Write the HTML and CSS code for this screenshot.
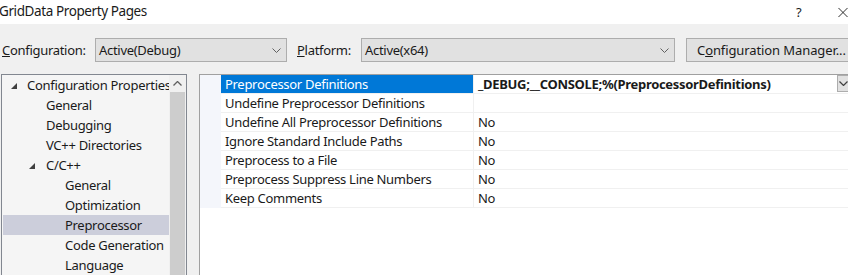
FILE: index.html
```html
<!DOCTYPE html>
<html>
<head>
<meta charset="utf-8">
<link rel="stylesheet" href="styles.css">
</head>
<body>
<div class="window">
  <div class="titlebar">
    <span class="title">GridData Property Pages</span>
    <span class="help">?</span>
    <span class="close"><svg width="11" height="11" viewBox="0 0 11 11"><path d="M0.5 0.5 L10.5 10.5 M10.5 0.5 L0.5 10.5" stroke="#1a1a1a" stroke-width="1" fill="none"/></svg></span>
  </div>
  <div class="toolbar">
    <span class="label label-config"><u>C</u>onfiguration:</span>
    <div class="combo combo-config">
      <span class="combo-text">Active(Debug)</span>
      <svg class="chev" width="9" height="5" viewBox="0 0 9 5"><path d="M0.5 0.5 L4.5 4.5 L8.5 0.5" stroke="#606060" fill="none"/></svg>
    </div>
    <span class="label label-platform"><u>P</u>latform:</span>
    <div class="combo combo-platform">
      <span class="combo-text">Active(x64)</span>
      <svg class="chev" width="9" height="5" viewBox="0 0 9 5"><path d="M0.5 0.5 L4.5 4.5 L8.5 0.5" stroke="#606060" fill="none"/></svg>
    </div>
    <div class="button">C<u>o</u>nfiguration Manager...</div>
  </div>
  <div class="main">
    <div class="tree">
      <div class="tree-items">
        <div class="node lvl0"><svg class="tri" width="6" height="6" viewBox="0 0 6 6"><path d="M6 0 L6 6 L0 6 Z" fill="#404040"/></svg><span>Configuration Properties</span></div>
        <div class="node lvl1"><span>General</span></div>
        <div class="node lvl1"><span>Debugging</span></div>
        <div class="node lvl1"><span>VC++ Directories</span></div>
        <div class="node lvl1"><svg class="tri" width="6" height="6" viewBox="0 0 6 6"><path d="M6 0 L6 6 L0 6 Z" fill="#404040"/></svg><span>C/C++</span></div>
        <div class="node lvl2"><span>General</span></div>
        <div class="node lvl2"><span>Optimization</span></div>
        <div class="node lvl2 selected"><span>Preprocessor</span></div>
        <div class="node lvl2"><span>Code Generation</span></div>
        <div class="node lvl2"><span>Language</span></div>
      </div>
      <div class="scrollbar">
        <div class="sb-arrow"><svg width="9" height="5" viewBox="0 0 9 5"><path d="M0.5 4.5 L4.5 0.5 L8.5 4.5" stroke="#606060" stroke-width="1.3" fill="none"/></svg></div>
        <div class="sb-thumb"></div>
      </div>
    </div>
    <div class="grid">
      <div class="gutter"></div>
      <div class="rows">
        <div class="row selected"><div class="name">Preprocessor Definitions</div><div class="value bold">_DEBUG;__CONSOLE;%(PreprocessorDefinitions)<span class="dd"><svg width="9" height="5" viewBox="0 0 9 5"><path d="M0.5 0.5 L4.5 4.5 L8.5 0.5" stroke="#404040" stroke-width="1.2" fill="none"/></svg></span></div></div>
        <div class="row"><div class="name">Undefine Preprocessor Definitions</div><div class="value"></div></div>
        <div class="row"><div class="name">Undefine All Preprocessor Definitions</div><div class="value">No</div></div>
        <div class="row"><div class="name">Ignore Standard Include Paths</div><div class="value">No</div></div>
        <div class="row"><div class="name">Preprocess to a File</div><div class="value">No</div></div>
        <div class="row"><div class="name">Preprocess Suppress Line Numbers</div><div class="value">No</div></div>
        <div class="row"><div class="name">Keep Comments</div><div class="value">No</div></div>
      </div>
    </div>
  </div>
</div>
</body>
</html>
```

FILE: styles.css
```css
html, body {
  margin: 0;
  padding: 0;
  overflow: hidden;
  background: #f0f0f0;
}
body {
  font-family: "Noto Sans", "Open Sans", sans-serif;
  font-size: 13px;
  letter-spacing: -0.3px;
  color: #1a1a1a;
}
.window {
  width: 848px;
  height: 275px;
  overflow: hidden;
  display: flex;
  flex-direction: column;
}
.titlebar {
  height: 24px;
  flex: none;
  background: #ffffff;
  display: flex;
  align-items: center;
}
.title {
  font-size: 13.5px;
  letter-spacing: -0.4px;
  margin-left: -1px;
  flex: 1;
  line-height: 20px;
  padding-bottom: 2px;
}
.help {
  font-size: 13px;
  width: 42px;
}
.close {
  width: 10px;
  display: flex;
  align-items: center;
  overflow: visible;
}
.toolbar {
  flex: none;
  display: flex;
  align-items: center;
  padding: 14px 0 12px 2px;
  height: 24px;
}
.label {
  flex: none;
}
.label-config { width: 93px; }
.label-platform { width: 64px; margin-left: 10px; }
.combo {
  flex: none;
  box-sizing: border-box;
  height: 24px;
  background: #e1e1e1;
  border: 1px solid #adadad;
  display: flex;
  align-items: center;
  padding: 0 5px 0 3px;
}
.combo-text { flex: 1; }
.combo-config { width: 192px; }
.combo-platform { width: 314px; }
.button {
  flex: none;
  box-sizing: border-box;
  height: 24px;
  width: 170px;
  margin-left: 11px;
  background: #e1e1e1;
  border: 1px solid #adadad;
  display: flex;
  align-items: center;
  padding-left: 10px;
  letter-spacing: -0.1px;
}
.main {
  flex: 1;
  display: flex;
  padding-left: 1px;
  min-height: 0;
}
.tree {
  flex: none;
  box-sizing: border-box;
  width: 186px;
  height: 220px;
  border: 1px solid #828790;
  background: #f5f5f5;
  display: flex;
}
.tree-items {
  flex: 1;
  padding-left: 1px;
  min-width: 0;
}
.node {
  height: 20px;
  display: flex;
  align-items: center;
  white-space: nowrap;
  overflow: hidden;
}
.node .tri {
  flex: none;
  margin-right: 10px;
  margin-top: 1px;
}
.lvl0 { padding-left: 8px; }
.lvl1 { padding-left: 43px; }
.lvl1 .tri { margin-left: -17px; margin-right: 11px; }
.lvl2 { padding-left: 62px; }
.node.selected { background: #cccedb; }
.scrollbar {
  flex: none;
  width: 17px;
  background: #f0f0f0;
  display: flex;
  flex-direction: column;
}
.sb-arrow {
  height: 17px;
  display: flex;
  align-items: center;
  justify-content: center;
}
.sb-thumb {
  flex: 1;
  margin: 0 1px;
  background: #cdcdcd;
}
.grid {
  flex: none;
  margin-left: 12px;
  width: 652px;
  height: 220px;
  box-sizing: border-box;
  border: 1px solid #a0a0a0;
  border-right: none;
  border-bottom: none;
  background: #ffffff;
  display: flex;
  align-items: flex-start;
}
.gutter {
  flex: none;
  width: 21px;
  height: 133px;
  background: #f4f6fb;
}
.rows {
  flex: 1;
}
.row {
  display: flex;
  height: 18px;
  border-bottom: 1px solid #f0f0f0;
  align-items: stretch;
}
.name {
  flex: none;
  width: 252px;
  padding-left: 4px;
  box-sizing: border-box;
  line-height: 18px;
  white-space: nowrap;
}
.value {
  flex: 1;
  border-left: 1px solid #f0f0f0;
  padding-left: 4px;
  line-height: 18px;
  white-space: nowrap;
  display: flex;
}
.row.selected .name {
  background: #0078d7;
  color: #ffffff;
}
.bold { font-weight: bold; }
.dd {
  flex: none;
  margin-left: auto;
  width: 14px;
  box-sizing: border-box;
  height: 17px;
  background: #e1e1e1;
  border: 1px solid #adadad;
  display: flex;
  align-items: center;
  padding-left: 1px;
}
```
